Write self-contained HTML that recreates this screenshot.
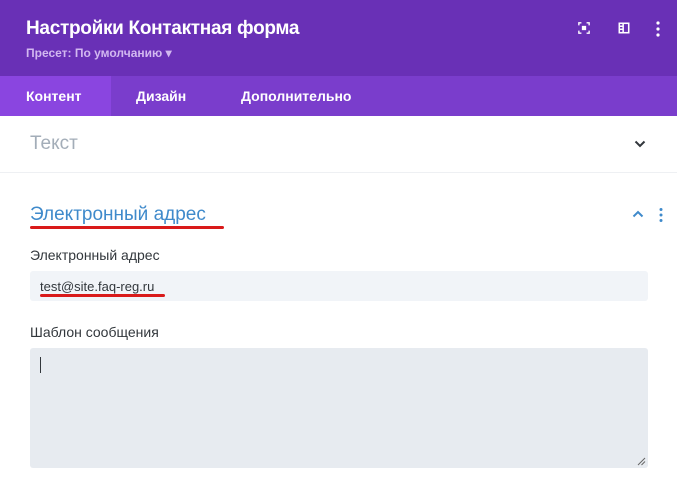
<!DOCTYPE html>
<html><head><meta charset="utf-8"><style>
*{margin:0;padding:0;box-sizing:border-box}
body{width:677px;height:500px;overflow:hidden;background:#fff;font-family:"Liberation Sans",sans-serif;position:relative}
.hdr{position:absolute;left:0;top:0;width:677px;height:76px;background:#6930b6}
.title{position:absolute;left:26px;top:18px;color:#fff;font-size:19px;font-weight:bold;letter-spacing:-0.3px}
.preset{position:absolute;left:26px;top:46px;color:#d2b8f0;font-size:12px;font-weight:bold}
.tabs{position:absolute;left:0;top:76px;width:677px;height:40px;background:#7a3dcc}
.tab{position:absolute;top:0;height:40px;line-height:40px;color:#fff;font-size:14px;font-weight:bold}
.act{left:0;width:111px;background:#8a45e0;padding-left:26px}
.sec1{position:absolute;left:30px;top:133px;font-size:19px;color:#a3adb8}
.sep{position:absolute;left:0;top:172px;width:677px;height:1px;background:#eef0f3}
.sec2{position:absolute;left:30px;top:204px;font-size:19px;color:#3f8acb}
.red{position:absolute;background:#d91a1a;height:3px;border-radius:2px}
.lbl{position:absolute;left:30px;font-size:14px;color:#32373c}
.inp{position:absolute;left:30px;top:271px;width:618px;height:30px;background:#f1f4f8;border-radius:3px}
.inptxt{position:absolute;left:40px;top:279px;font-size:13px;color:#32373c}
.ta{position:absolute;left:30px;top:348px;width:618px;height:120px;background:#e7ebf0;border-radius:3px}
</style></head><body>
<div class="hdr">
<div class="title">Настройки Контактная форма</div>
<div class="preset">Пресет: По умолчанию ▾</div>
<svg style="position:absolute;left:578px;top:22px" width="12" height="12" viewBox="0 0 14 14" fill="none" stroke="#fff" stroke-width="1.6"><path d="M1 4V1h3M10 1h3v3M13 10v3h-3M4 13H1v-3"/><rect x="4.5" y="4.5" width="5" height="5" fill="#fff" stroke="none"/></svg>
<svg style="position:absolute;left:618px;top:22px" width="12" height="12" viewBox="0 0 14 14" fill="none" stroke="#fff" stroke-width="1.8"><rect x="1.5" y="1.5" width="11" height="11"/><path d="M6 1.5v11M2 5h4M2 8.5h4"/></svg>
<svg style="position:absolute;left:655px;top:20px" width="6" height="18"><circle cx="3" cy="3" r="1.6" fill="#fff"/><circle cx="3" cy="9" r="1.6" fill="#fff"/><circle cx="3" cy="15" r="1.6" fill="#fff"/></svg>
</div>
<div class="tabs">
<div class="tab act">Контент</div>
<div class="tab" style="left:136px">Дизайн</div>
<div class="tab" style="left:241px">Дополнительно</div>
</div>
<div class="sec1">Текст</div>
<svg style="position:absolute;left:634px;top:140px" width="12" height="8" viewBox="0 0 12 8"><path d="M1.5 1.5l4.5 4.5 4.5-4.5" fill="none" stroke="#32373c" stroke-width="2"/></svg>
<div class="sep"></div>
<div class="sec2">Электронный адрес</div>
<div class="red" style="left:30px;top:226px;width:194px"></div>
<svg style="position:absolute;left:632px;top:210px" width="12" height="8" viewBox="0 0 12 8"><path d="M1.5 6.5l4.5-4.5 4.5 4.5" fill="none" stroke="#3f8acb" stroke-width="2"/></svg>
<svg style="position:absolute;left:658px;top:207px" width="6" height="16"><circle cx="3" cy="2.5" r="1.5" fill="#3f8acb"/><circle cx="3" cy="8" r="1.5" fill="#3f8acb"/><circle cx="3" cy="13.5" r="1.5" fill="#3f8acb"/></svg>
<div class="lbl" style="top:247px">Электронный адрес</div>
<div class="inp"></div>
<div class="inptxt">test@site.faq-reg.ru</div>
<div class="red" style="left:40px;top:294px;width:125px"></div>
<div class="lbl" style="top:324px">Шаблон сообщения</div>
<div class="ta"></div>
<div style="position:absolute;left:40px;top:357px;width:1px;height:16px;background:#32373c"></div>
<svg style="position:absolute;left:637px;top:457px" width="9" height="9"><path d="M1 8L8 1M4.5 8L8 4.5" stroke="#666" stroke-width="1"/></svg>
</body></html>
